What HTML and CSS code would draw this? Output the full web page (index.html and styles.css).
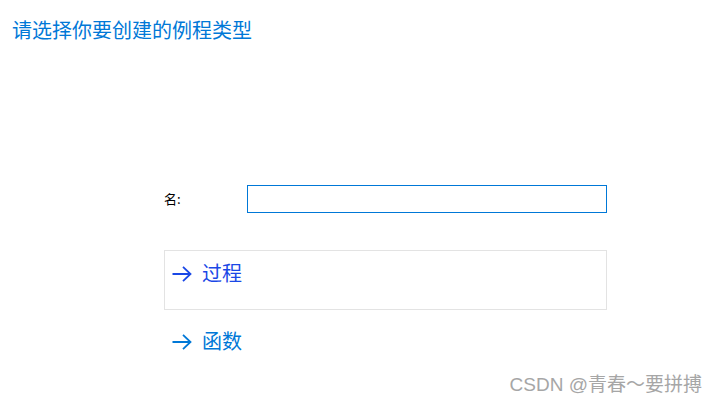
FILE: index.html
```html
<!DOCTYPE html>
<html lang="zh-CN">
<head>
<meta charset="utf-8">
<title>例程类型</title>
<link rel="stylesheet" href="styles.css">
</head>
<body>
<h1 class="title">请选择你要创建的例程类型</h1>
<div class="form">
  <div class="row">
    <label class="label" for="name">名:</label>
    <input class="input" id="name" type="text">
  </div>
  <div class="options">
    <div class="option option-active">
      <svg class="arrow" width="20" height="16" viewBox="0 0 20 16"><path d="M0.5 8H18.5M11 0.8L18.5 8L11 15.2" fill="none" stroke="currentColor" stroke-width="1.8"/></svg>
      <span class="option-text">过程</span>
    </div>
    <div class="option">
      <svg class="arrow" width="20" height="16" viewBox="0 0 20 16"><path d="M0.5 8H18.5M11 0.8L18.5 8L11 15.2" fill="none" stroke="currentColor" stroke-width="1.8"/></svg>
      <span class="option-text">函数</span>
    </div>
  </div>
</div>
<div class="watermark">CSDN @青春～要拼搏</div>
</body>
</html>
```

FILE: styles.css
```css
html, body {
  margin: 0;
  padding: 0;
  background: #ffffff;
}
body {
  width: 717px;
  height: 402px;
  position: relative;
  overflow: hidden;
  font-family: "Noto Sans CJK SC", "Noto Sans", sans-serif;
}
.title {
  margin: 0;
  padding: 16px 0 0 12px;
  font-size: 20px;
  line-height: 28px;
  font-weight: normal;
  color: #0078d7;
}
.form {
  margin: 141px 0 0 164px;
  width: 443px;
}
.row {
  display: flex;
  align-items: center;
  height: 28px;
}
.label {
  width: 83px;
  font-size: 13px;
  color: #000;
  line-height: 16px;
}
.input {
  box-sizing: border-box;
  width: 360px;
  height: 28px;
  margin: 0;
  padding: 0 6px;
  border: 1px solid #0078d7;
  border-radius: 0;
  outline: none;
  font-size: 14px;
}
.options {
  margin-top: 37px;
  display: flex;
  flex-direction: column;
  gap: 8px;
}
.option {
  box-sizing: border-box;
  height: 60px;
  border: 1px solid transparent;
  padding: 8px 0 0 7px;
  display: flex;
  align-items: flex-start;
  color: #0078d7;
}
.option-active {
  border-color: #e3e3e3;
  color: #1a48e6;
}
.arrow {
  margin-top: 7px;
  margin-right: 10px;
  flex: none;
}
.option-text {
  font-size: 20px;
  line-height: 28px;
}
.watermark {
  position: absolute;
  right: 15px;
  bottom: 6px;
  font-family: "Liberation Sans", "Noto Sans CJK SC", sans-serif;
  font-size: 19px;
  line-height: 22px;
  color: #a6a6a6;
  white-space: nowrap;
}
```
